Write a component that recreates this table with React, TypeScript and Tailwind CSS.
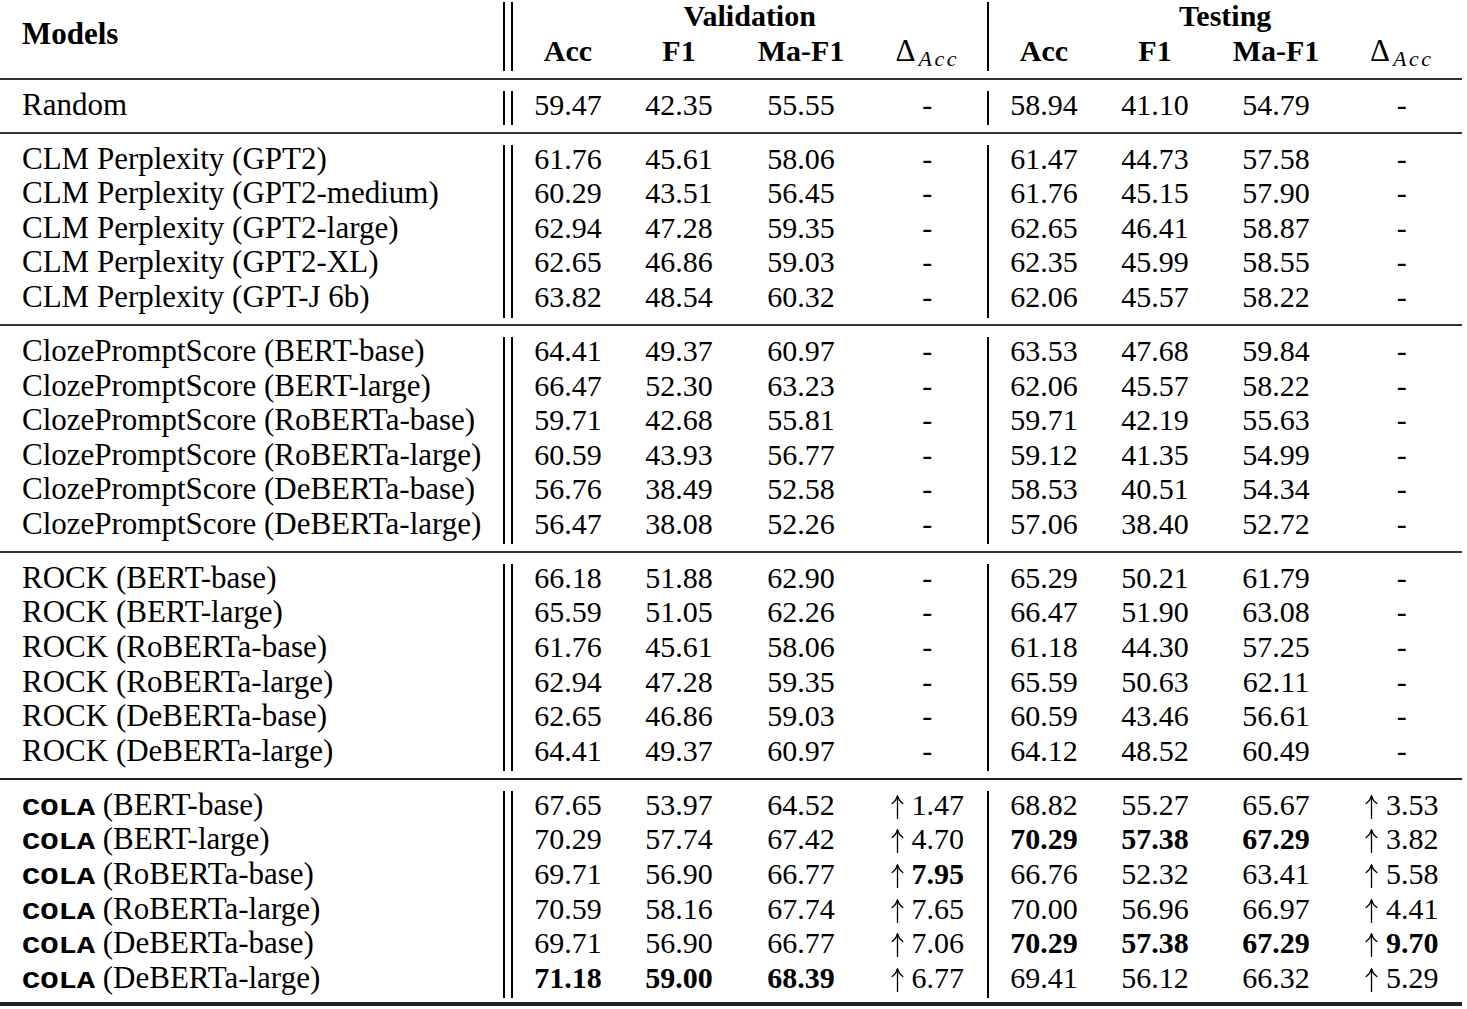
import React from "react";

type Row = { name: string; val: string[]; test: string[] };

const sections: Row[][] = [
  [{ name: "Random", val: ["59.47", "42.35", "55.55", "-"], test: ["58.94", "41.10", "54.79", "-"] }],
  [
    { name: "CLM Perplexity (GPT2)", val: ["61.76", "45.61", "58.06", "-"], test: ["61.47", "44.73", "57.58", "-"] },
    { name: "CLM Perplexity (GPT2-medium)", val: ["60.29", "43.51", "56.45", "-"], test: ["61.76", "45.15", "57.90", "-"] },
    { name: "CLM Perplexity (GPT2-large)", val: ["62.94", "47.28", "59.35", "-"], test: ["62.65", "46.41", "58.87", "-"] },
    { name: "CLM Perplexity (GPT2-XL)", val: ["62.65", "46.86", "59.03", "-"], test: ["62.35", "45.99", "58.55", "-"] },
    { name: "CLM Perplexity (GPT-J 6b)", val: ["63.82", "48.54", "60.32", "-"], test: ["62.06", "45.57", "58.22", "-"] },
  ],
  [
    { name: "ClozePromptScore (BERT-base)", val: ["64.41", "49.37", "60.97", "-"], test: ["63.53", "47.68", "59.84", "-"] },
    { name: "ClozePromptScore (BERT-large)", val: ["66.47", "52.30", "63.23", "-"], test: ["62.06", "45.57", "58.22", "-"] },
    { name: "ClozePromptScore (RoBERTa-base)", val: ["59.71", "42.68", "55.81", "-"], test: ["59.71", "42.19", "55.63", "-"] },
    { name: "ClozePromptScore (RoBERTa-large)", val: ["60.59", "43.93", "56.77", "-"], test: ["59.12", "41.35", "54.99", "-"] },
    { name: "ClozePromptScore (DeBERTa-base)", val: ["56.76", "38.49", "52.58", "-"], test: ["58.53", "40.51", "54.34", "-"] },
    { name: "ClozePromptScore (DeBERTa-large)", val: ["56.47", "38.08", "52.26", "-"], test: ["57.06", "38.40", "52.72", "-"] },
  ],
  [
    { name: "ROCK (BERT-base)", val: ["66.18", "51.88", "62.90", "-"], test: ["65.29", "50.21", "61.79", "-"] },
    { name: "ROCK (BERT-large)", val: ["65.59", "51.05", "62.26", "-"], test: ["66.47", "51.90", "63.08", "-"] },
    { name: "ROCK (RoBERTa-base)", val: ["61.76", "45.61", "58.06", "-"], test: ["61.18", "44.30", "57.25", "-"] },
    { name: "ROCK (RoBERTa-large)", val: ["62.94", "47.28", "59.35", "-"], test: ["65.59", "50.63", "62.11", "-"] },
    { name: "ROCK (DeBERTa-base)", val: ["62.65", "46.86", "59.03", "-"], test: ["60.59", "43.46", "56.61", "-"] },
    { name: "ROCK (DeBERTa-large)", val: ["64.41", "49.37", "60.97", "-"], test: ["64.12", "48.52", "60.49", "-"] },
  ],
  [
    { name: "COLA (BERT-base)", val: ["67.65", "53.97", "64.52", "^1.47"], test: ["68.82", "55.27", "65.67", "^3.53"] },
    { name: "COLA (BERT-large)", val: ["70.29", "57.74", "67.42", "^4.70"], test: ["*70.29", "*57.38", "*67.29", "^3.82"] },
    { name: "COLA (RoBERTa-base)", val: ["69.71", "56.90", "66.77", "^*7.95"], test: ["66.76", "52.32", "63.41", "^5.58"] },
    { name: "COLA (RoBERTa-large)", val: ["70.59", "58.16", "67.74", "^7.65"], test: ["70.00", "56.96", "66.97", "^4.41"] },
    { name: "COLA (DeBERTa-base)", val: ["69.71", "56.90", "66.77", "^7.06"], test: ["*70.29", "*57.38", "*67.29", "^*9.70"] },
    { name: "COLA (DeBERTa-large)", val: ["*71.18", "*59.00", "*68.39", "^6.77"], test: ["69.41", "56.12", "66.32", "^5.29"] },
  ],
];

const valW = ["w-[111px]", "w-[111px]", "w-[133px]", "w-[119.5px]"];
const testW = ["w-[111px]", "w-[111px]", "w-[131px]", "w-[120.5px]"];

function DBar() {
  return (
    <div className="flex w-[9.5px] shrink-0 justify-between self-stretch">
      <div className="w-[1.5px] bg-black" />
      <div className="w-[1.5px] bg-black" />
    </div>
  );
}

function Bar() {
  return <div className="w-[1.5px] shrink-0 self-stretch bg-black" />;
}

function UpArrow() {
  return (
    <svg
      viewBox="0 0 13 24"
      className="mr-[8px] inline-block h-[24px] w-[13px] align-[-4px]"
      fill="none"
      stroke="black"
      strokeWidth="1.3"
      strokeLinecap="round"
    >
      <path d="M6.5 1.2 L6.5 23.5" />
      <path d="M1.2 8.6 C3.8 6.6 5.7 4 6.5 1 C7.3 4 9.2 6.6 11.8 8.6" />
    </svg>
  );
}

function Value({ v }: { v: string }) {
  let s = v;
  let arrow = false;
  if (s.startsWith("^")) {
    arrow = true;
    s = s.slice(1);
  }
  let bold = false;
  if (s.startsWith("*")) {
    bold = true;
    s = s.slice(1);
  }
  return (
    <span className="whitespace-nowrap">
      {arrow && <UpArrow />}
      <span className={bold ? "font-bold" : "font-normal"}>{s}</span>
    </span>
  );
}

function Name({ name }: { name: string }) {
  if (name.startsWith("COLA ")) {
    return (
      <span className="whitespace-nowrap">
        <span className="inline-block w-[73px]">
          <span className="inline-block origin-left scale-x-[1.27] font-['Liberation_Mono',monospace] text-[24px] font-bold">
            COLA
          </span>
        </span>{" "}
        {name.slice(5)}
      </span>
    );
  }
  return <span className="whitespace-nowrap">{name}</span>;
}

function DataRow({ r }: { r: Row }) {
  return (
    <div className="flex h-[34.6px] text-[30px] leading-[28px]">
      <div className="w-[503px] shrink-0 pl-[22px] text-[31px]">
        <Name name={r.name} />
      </div>
      <DBar />
      {r.val.map((v, i) => (
        <div key={i} className={`${valW[i]} shrink-0 text-center`}>
          <Value v={v} />
        </div>
      ))}
      <Bar />
      {r.test.map((v, i) => (
        <div key={i} className={`${testW[i]} shrink-0 text-center`}>
          <Value v={v} />
        </div>
      ))}
    </div>
  );
}

function SubHeads({ widths }: { widths: string[] }) {
  const labels = ["Acc", "F1", "Ma-F1"];
  return (
    <div className="flex h-[34.6px]">
      {labels.map((l, i) => (
        <div key={l} className={`${widths[i]} shrink-0 text-center font-bold`}>
          {l}
        </div>
      ))}
      <div className={`${widths[3]} shrink-0 text-center font-normal`}>
        <span className="whitespace-nowrap">
          <span className="text-[31px]">Δ</span>
          <sub className="ml-[3px] text-[22px] italic tracking-[2.5px]">Acc</sub>
        </span>
      </div>
    </div>
  );
}

export default function App() {
  return (
    <div className="min-h-screen w-full bg-white text-black font-['Liberation_Serif',serif]">
      <div className="w-[1462px] pt-[2px]">
        <div className="flex pb-[6.4px] text-[30px] leading-[28px]">
          <div className="w-[503px] shrink-0 pl-[22px] pt-[18px] text-[31px] font-bold">Models</div>
          <DBar />
          <div className="flex w-[474.5px] shrink-0 flex-col">
            <div className="h-[34.6px] text-center font-bold">Validation</div>
            <SubHeads widths={valW} />
          </div>
          <Bar />
          <div className="flex w-[473.5px] shrink-0 flex-col">
            <div className="h-[34.6px] text-center font-bold">Testing</div>
            <SubHeads widths={testW} />
          </div>
        </div>
        {sections.map((sec, si) => (
          <div
            key={si}
            className={
              si === sections.length - 1
                ? "border-t-2 border-b-4 border-[#222] pt-[11px] pb-[4px]"
                : "border-t-2 border-[#333] pt-[11px] pb-[6.4px]"
            }
          >
            {sec.map((r, ri) => (
              <DataRow key={ri} r={r} />
            ))}
          </div>
        ))}
      </div>
    </div>
  );
}
